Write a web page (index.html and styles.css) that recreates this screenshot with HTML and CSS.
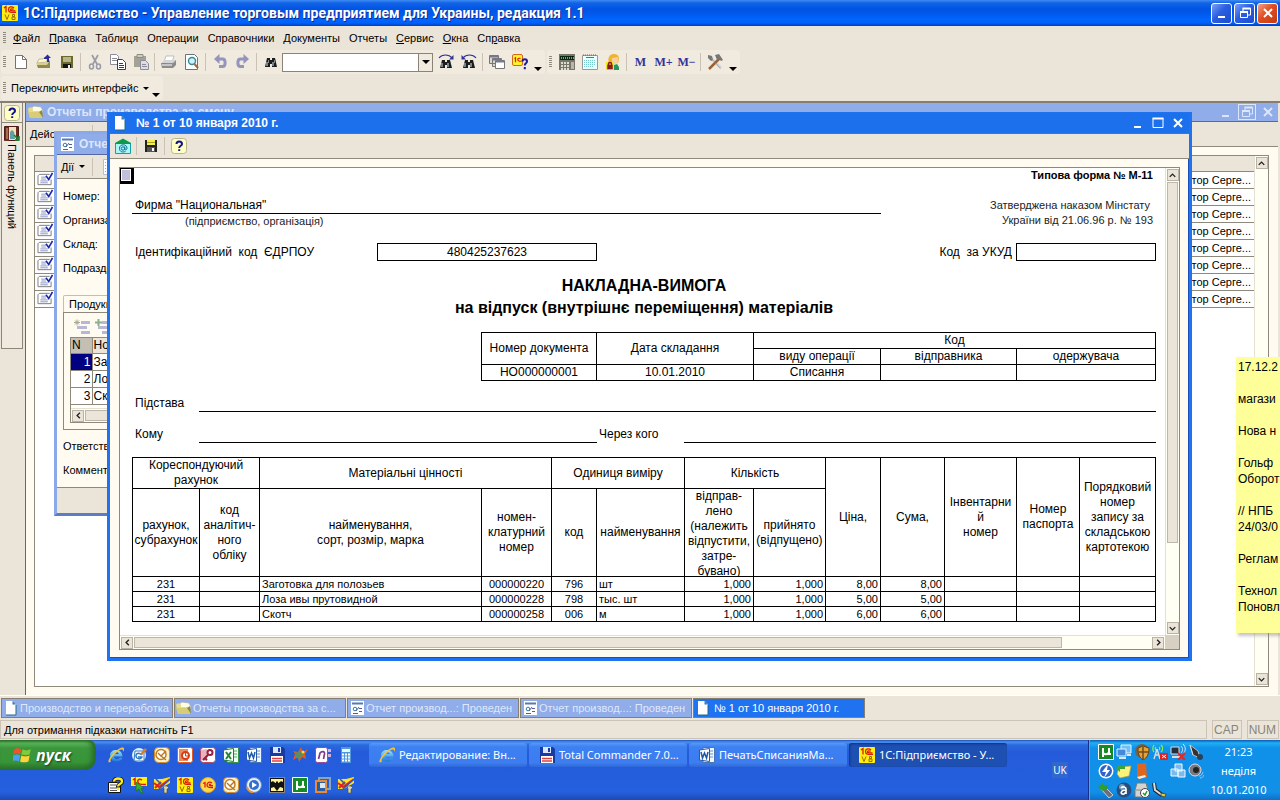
FILE: index.html
```html
<!DOCTYPE html>
<html lang="uk">
<head>
<meta charset="utf-8">
<title>1С:Підприємство - Управление торговым предприятием для Украины, редакция 1.1</title>
<link rel="stylesheet" href="styles.css">
</head>
<body>
<svg class="sprite" aria-hidden="true">
  <defs>
    <linearGradient id="g-ie" x1="0" y1="0" x2="0" y2="1"><stop offset="0" stop-color="#9be0ff"/><stop offset="1" stop-color="#1b78d6"/></linearGradient>
  </defs>
  <symbol id="v8" viewBox="0 0 16 16"><rect width="16" height="16" rx="1" fill="#ffee10"/><path d="M2 3l2-1.500v6M12 3C10 1 6.500 1.500 6.500 4.500S9 7.500 14 7.300M11.500 4.500C10 3.300 8.500 4 8.500 5s1 .8 5 .8" fill="none" stroke="#d91c10" stroke-width="1.300"/><path d="M3 9.500l2 5 2-5M10.500 9.500h2v2h-2zM10 12h3v2.500h-3z" fill="none" stroke="#9a6a00"/></symbol>
  <symbol id="onec" viewBox="0 0 16 16"><circle cx="8" cy="8" r="7.500" fill="#ffd94a" stroke="#e9a51b"/><path d="M3 6.500l2-1v5M12 6C10 4.500 7 5 7 8s3 2.500 6 2.500M11 7.500c-2-.7-2.500 1 0 1.200h2" fill="none" stroke="#d91c10" stroke-width="1.300"/></symbol>
  <symbol id="doc" viewBox="0 0 16 16"><path d="M2.500 1.500h7l4 4v9h-11z" fill="#fff" stroke="#77716a"/><path d="M9.500 1.500v4h4" fill="none" stroke="#77716a"/></symbol>
  <symbol id="docw" viewBox="0 0 16 16"><path d="M3 1h6.500L13 4.500V15H3z" fill="#fff"/><path d="M9.500 1v3.500H13z" fill="#3c7c9c"/><path d="M3 15h10V5" fill="none" stroke="#256988"/></symbol>
  <symbol id="openf" viewBox="0 0 16 16"><path d="M1 9l2-4h4l1-1.500 3 .5v4z" fill="#fff8c8" stroke="#aaa37c" stroke-width=".7"/><path d="M0 9h10l4-3v8H2z" fill="#d8d08c"/><path d="M2 14h12V6l-3 5H1z" fill="#8c8a50"/><path d="M8 5h3v3h2V4h2l-3.500-3.500L8 4z" fill="#2b2b9b"/></symbol>
  <symbol id="save" viewBox="0 0 16 16"><path d="M2 2h12v12H2z" fill="#6b682c"/><path d="M4 3h8v5H4z" fill="#b7b58a"/><path d="M4 10h8v4H4z" fill="#151510"/><path d="M9 11h2v3H9z" fill="#eee"/></symbol>
  <symbol id="savey" viewBox="0 0 16 16"><path d="M2 2h12v12H2z" fill="#222"/><path d="M4 2h8v5H4z" fill="#f6ee3c"/><path d="M4 4h8v1H4z" fill="#aaa12c"/><path d="M4 9h8v5H4z" fill="#555"/><path d="M9 10h2v3H9z" fill="#fff"/></symbol>
  <symbol id="cut" viewBox="0 0 16 16"><path d="M5 1l5 9M11 1L6 10" stroke="#9b9ba6" stroke-width="1.700"/><ellipse cx="4.500" cy="12.500" rx="2" ry="2.500" fill="none" stroke="#9b9ba6" stroke-width="1.500"/><ellipse cx="11.500" cy="12.500" rx="2" ry="2.500" fill="none" stroke="#9b9ba6" stroke-width="1.500"/></symbol>
  <symbol id="copy" viewBox="0 0 16 16"><path d="M.5.500h6l2 2v8h-8z" fill="#fff" stroke="#8b8b99"/><path d="M2 4.500h5M2 6.500h5" stroke="#8b8b99"/><path d="M7.500 5.500h5l3 3v7h-8z" fill="#fff" stroke="#33339b"/><path d="M9 9.500h4M9 11.500h5M9 13.500h5" stroke="#33339b"/></symbol>
  <symbol id="paste" viewBox="0 0 16 16"><path d="M1 2h12v11H1z" fill="#a3a294"/><path d="M4 .5h6v3H4z" fill="#cfcdbd" stroke="#8f8e82"/><path d="M7.500 6.500h5l3 3v6h-8z" fill="#dedde4" stroke="#8b8b99"/><path d="M9 10.500h4M9 12.500h5" stroke="#8b8b99"/></symbol>
  <symbol id="print" viewBox="0 0 16 16"><path d="M5 2h8l-2 6H3z" fill="#fff" stroke="#aaa" stroke-width=".7"/><path d="M1 8l3-2h11l-2 4H1z" fill="#d5d5d5"/><path d="M0 9h12l3-3v5l-3 3H1z" fill="#8c8c8c"/><path d="M1 11h10" stroke="#fff"/><path d="M2 9.500h3" stroke="#2fb35c"/></symbol>
  <symbol id="preview" viewBox="0 0 16 16"><path d="M1.500.500h9l3 3v12h-12z" fill="#fff" stroke="#66747c"/><circle cx="8" cy="7" r="3.500" fill="#cdf2f7" stroke="#36899b" stroke-width="1.400"/><path d="M10.500 10l3.500 4" stroke="#a06a32" stroke-width="2"/></symbol>
  <symbol id="undo" viewBox="0 0 16 16"><path d="M5 5h5.500c3.500 0 3.500 7.500 0 7.500H7" fill="none" stroke="#9494bc" stroke-width="3"/><path d="M7.500 0v10L2 5z" fill="#9494bc"/></symbol>
  <symbol id="redo" viewBox="0 0 16 16"><path d="M11 5H5.500C2 5 2 12.500 5.500 12.500H9" fill="none" stroke="#9494bc" stroke-width="3"/><path d="M8.500 0v10L14 5z" fill="#9494bc"/></symbol>
  <symbol id="find" viewBox="0 0 16 16"><path d="M4 4h3v2h2V4h3l2 9H9v-3H7v3H2z" fill="#1d1d1d"/><path d="M4 8v4M10 8v4" stroke="#c4f0f0"/><path d="M5.500 6v3M11.500 6v3" stroke="#888"/></symbol>
  <symbol id="findn" viewBox="0 0 16 16"><path d="M4 6h3v2h2V6h3l2 8H9v-3H7v3H2z" fill="#1d1d1d"/><path d="M4 9v4M10 9v4" stroke="#c4f0f0"/><path d="M1 4c3-4 10-4 13 0" fill="none" stroke="#33339b" stroke-width="1.200"/><path d="M15.500 1v4.500H11z" fill="#33339b"/></symbol>
  <symbol id="findp" viewBox="0 0 16 16"><path d="M4 6h3v2h2V6h3l2 8H9v-3H7v3H2z" fill="#1d1d1d"/><path d="M4 9v4M10 9v4" stroke="#c4f0f0"/><path d="M15 4C12 0 5 0 2 4" fill="none" stroke="#33339b" stroke-width="1.200"/><path d="M.5 1v4.500H5z" fill="#33339b"/></symbol>
  <symbol id="wins" viewBox="0 0 16 16"><path d="M.5 1.500h9v8h-9zM3.500 4.500h9v8h-9z" fill="#d9d6d0" stroke="#777"/><path d="M6.500 6.500h9v8h-9z" fill="#fff" stroke="#777"/><path d="M1 2.500h8M4 5.500h8M7 7.500h8" stroke="#77798c" stroke-width="2"/></symbol>
  <symbol id="help1c" viewBox="0 0 16 16"><rect x=".5" y=".5" width="10" height="11" rx="1.500" fill="#fff22a" stroke="#d36a15"/><path d="M2.500 4.500l1-.7v4.500M8.500 4.500C4.500 3 5 8.500 9.500 7" fill="none" stroke="#d91c10" stroke-width="1.200"/><path d="M10.500 7.500c0-3 4.500-3 4.500 0 0 2-2.200 1.700-2.200 4M12.800 13v2.200" fill="none" stroke="#1c1c9c" stroke-width="2"/></symbol>
  <symbol id="calc" viewBox="0 0 16 16"><path d="M0 0h16v16H0z" fill="#77756c"/><path d="M1 2h14v4H1z" fill="#062a10"/><path d="M2 4h13" stroke="#22d060" stroke-width="2" stroke-dasharray="1 1"/><path d="M2 9h9M2 12h9M2 15h9" stroke="#dedbd0" stroke-width="2" stroke-dasharray="2 1"/><path d="M12 8h3v7h-3z" fill="#b8b5aa"/></symbol>
  <symbol id="cal" viewBox="0 0 16 16"><path d="M.5 1.500h15v14H.5z" fill="#eaffff" stroke="#999"/><path d="M1 1h14" stroke="#666" stroke-dasharray="1 1"/><path d="M4 3.500h8" stroke="#d6491d"/><path d="M2 6.500h12M2 8.500h12M2 10.500h12M2 12.500h10" stroke="#74cccc" stroke-dasharray="1 1"/></symbol>
  <symbol id="user" viewBox="0 0 16 16"><path d="M4 10C2 3 5 0 9 0c5 0 6 4 4 9z" fill="#eeb524"/><path d="M7 4l6-1 .5 4-2 3H7z" fill="#f8cda8"/><path d="M6 16l3-5 3-1 2 3v3z" fill="#249a5a"/><path d="M1 8h8v8H1z" fill="#f4e51b"/><path d="M3.500 11.500V10a1.500 1.500 0 013 0v1.500M3 11.500h4v3H3z" fill="none" stroke="#8c1a20" stroke-width="1.500"/><path d="M3 11.500h4v3H3z" fill="#8c1a20"/></symbol>
  <symbol id="tools" viewBox="0 0 16 16"><path d="M2 2l12 12" stroke="#d8d8d8" stroke-width="3"/><path d="M1 1l4 1 1 4-2 1-3-3z" fill="#777"/><path d="M13 4L2 15" stroke="#9b6235" stroke-width="2.500"/><path d="M8 1l4-1 4 6-2 1-2-2-2 1z" fill="#777"/><path d="M4 4l9.500 10.500" stroke="#888" stroke-width=".7"/></symbol>
  <symbol id="help" viewBox="0 0 16 16"><rect x=".5" y=".5" width="15" height="15" rx="3" fill="#ffffc4" stroke="#b9b48e"/><path d="M5.500 6C5.500 2.500 11 2.500 11 6c0 2-2.800 1.500-2.800 4M8.200 11.300V13" fill="none" stroke="#13138c" stroke-width="2"/></symbol>
  <symbol id="home" viewBox="0 0 16 16"><path d="M.5 5.500h15v10H.5z" fill="#aef6f6" stroke="#12a0a6"/><path d="M0 5L8 .5 16 5v1H0z" fill="#0c9a4b"/><circle cx="8" cy="10.500" r="1.700" fill="none" stroke="#096d93"/><path d="M9.800 8.500V11c0 1.500 2.200 1 2.200-.8 0-4.500-7.500-4.500-7.500 0 0 4 3.500 4.300 6 3.200" fill="none" stroke="#096d93"/></symbol>
  <symbol id="folders" viewBox="0 0 16 16"><path d="M2 5l4-3 7 1 2 4-3 5H2z" fill="#fffde4" stroke="#aaa" stroke-width=".7"/><path d="M0 5l1-1.500h3L5 5v2h9v7H2z" fill="#e6dc8c"/><path d="M2 14L0 8h11l4 6z" fill="#d8cc74"/><path d="M11 8l3-2 1 8z" fill="#8d8844"/></symbol>
  <symbol id="report" viewBox="0 0 16 16"><path d="M2 1h13v14H2z" fill="#fff"/><path d="M3 3.500h11" stroke="#5878b0" stroke-width="2"/><circle cx="6" cy="9" r="1.800" fill="none" stroke="#337f9c"/><path d="M7 11l3-4M10 8.500h3M10 11.500h3M4 13.500h5" stroke="#555ba2"/></symbol>
  <symbol id="rowdoc" viewBox="0 0 16 16"><path d="M13 2.500H2L.5 4v9.500h14V8" fill="#fff" stroke="#777"/><path d="M4 5.500h5M4 7.500h5M3 9.500h8M3 11.500h8" stroke="#8892c4"/><path d="M9 4l3 4 4-7" fill="none" stroke="#1928a8" stroke-width="1.700"/></symbol>
  <symbol id="door" viewBox="0 0 16 16"><path d="M.5.500h14v14H.5z" fill="#f1dfbd" stroke="#4b1c14"/><path d="M1 1h4v14H1zM12 1h2v14h-2z" fill="#6f2b20"/><path d="M3 2v11" stroke="#d9b38b"/><path d="M6 13V6l2-2 2 2 1 7z" fill="#5ba1a5"/><path d="M10 9l5 5m0-4v4h-4" fill="none" stroke="#178736" stroke-width="1.600"/></symbol>
  <symbol id="list" viewBox="0 0 16 16"><path d="M.5.500h15v15H.5z" fill="#fff" stroke="#b4bedb"/><path d="M2 3.500h12M2 6.500h12M2 9.500h12M2 12.500h12" stroke="#8da5d8" stroke-dasharray="1 1"/><path d="M5 8l5-4v3h5v2h-5v3z" fill="#2a13b0"/></symbol>
  <symbol id="addrow" viewBox="0 0 16 16"><path d="M7 2h9v3H7zM3 7h10v3H3zM7 12h9v3H7z" fill="#b7b8d4"/><path d="M0 3.500h6M3 .5v6M1 1.500l4 4M5 1.500l-4 4" stroke="#a8a891"/></symbol>
  <symbol id="addrow2" viewBox="0 0 16 16"><path d="M7 2h9v3H7zM3 7h10v3H3zM7 12h9v3H7z" fill="#b7b8d4"/><path d="M0 3.500h7M3.500 0v7" stroke="#8fae8f" stroke-width="2"/></symbol>
  <symbol id="star" viewBox="0 0 16 16"><path d="M8 1l2 4 5-1-3 4 3 4-5-1-2 4-2-4-5 1 3-4-3-4 5 1z" fill="#f7d92a"/></symbol>
  <symbol id="ie" viewBox="0 0 16 16"><path d="M14.500 9.500H6c.3 3.300 4.500 3.500 5.500 1.300h3C12.500 16.500 2 16 2 8.500 2 1 14.500 1 14.500 9.500zM6 7h4.800C10.500 4.300 6.300 4.300 6 7z" fill="url(#g-ie)"/><path d="M1 15.500c-3-2 8-15 13.500-15 2.500 0 1.500 3 .5 4.500.5-3-1.500-3-4.500-1C5.500 7.500 1 13 3 14.500z" fill="#f6c52e"/></symbol>
  <symbol id="mail" viewBox="0 0 16 16"><circle cx="8" cy="8" r="7" fill="#dff2ff"/><path d="M4 4h9v10H3z" fill="#fff" stroke="#3a7ac0"/><path d="M11 8c-4-4-8 0-5 3 2 1.500 5 0 5-1H7" fill="none" stroke="#2878c8" stroke-width="1.500"/><path d="M9 7l5-6 2 2-5 5z" fill="#e07b25"/></symbol>
  <symbol id="outlook" viewBox="0 0 16 16"><rect x=".5" y=".5" width="15" height="15" rx="4" fill="#fff1c9" stroke="#d28b25"/><circle cx="7" cy="7.500" r="5" fill="#fff" stroke="#c47e1d" stroke-width="1.500"/><path d="M4 6l3 3 5-5M7 9l5 4" fill="none" stroke="#b77522" stroke-width="1.400"/></symbol>
  <symbol id="ppt" viewBox="0 0 16 16"><rect x=".5" y=".5" width="15" height="15" rx="2" fill="#fff" stroke="#df5b29"/><path d="M2 2h9v12H2z" fill="#ef8b60"/><circle cx="8.500" cy="8.500" r="3.500" fill="#fff" stroke="#d43e17" stroke-width="2"/><path d="M8.500 5v4H12" stroke="#d43e17" fill="none"/></symbol>
  <symbol id="access" viewBox="0 0 16 16"><rect x=".5" y=".5" width="15" height="15" rx="3" fill="#fff" stroke="#b04b61"/><path d="M1 3l6-1v12l-6-1z" fill="#e8b3bf"/><circle cx="10" cy="5.500" r="2.500" fill="none" stroke="#9a1e3c" stroke-width="2"/><path d="M8 8l-5 5M5 11l2 2" stroke="#9a1e3c" stroke-width="2"/></symbol>
  <symbol id="excel" viewBox="0 0 16 16"><path d="M4 .5h11.500v15H4z" fill="#edfff0" stroke="#37914b"/><path d="M11 4h3M11 7h3M11 10h3" stroke="#57ad66"/><path d="M.5 3l10-1.500v13L.5 13z" fill="#fff" stroke="#237a38"/><path d="M3 5l5 7M8 5l-5 7" stroke="#21853a" stroke-width="2"/></symbol>
  <symbol id="word" viewBox="0 0 16 16"><path d="M4 .5h11.500v15H4z" fill="#edf6ff" stroke="#4774b4"/><path d="M11 4h3M11 7h3M11 10h3" stroke="#6d92c9"/><path d="M.5 3l10-1.500v13L.5 13z" fill="#fff" stroke="#2c5ba3"/><path d="M2 5l1.500 6L5.500 6l2 5L9 5" fill="none" stroke="#1d58aa" stroke-width="1.500"/></symbol>
  <symbol id="floppy" viewBox="0 0 16 16"><path d="M1 0h13l2 2v14H1z" fill="#173ba2"/><path d="M4 0h8v6H4z" fill="#dbe5ff"/><path d="M9 1h2v4H9z" fill="#173ba2"/><path d="M2 9h12v7H2z" fill="#fff"/><path d="M3 11.500h10M3 14h10" stroke="#e04141" stroke-width="1.300"/></symbol>
  <symbol id="bird" viewBox="0 0 16 16"><path d="M1 4l5 1 3-5 2 5 5-3-3 5 1 5-4-2-3 5-1-5-5 3 2-6z" fill="#e25d17"/><path d="M3 6l5-2 4 3-5 5-4-2z" fill="#5c8d62"/><circle cx="11" cy="5" r="1.500" fill="#ffd92d"/></symbol>
  <symbol id="note" viewBox="0 0 16 16"><rect x=".5" y=".5" width="12" height="15" rx="2" fill="#fff" stroke="#994b9b"/><path d="M13 2h3v3h-3zM13 7h3v3h-3z" fill="#d6afe0"/><path d="M3.500 12l1.500-6c1.500-2 5-2 4.500 1L8.500 12" fill="none" stroke="#82388c" stroke-width="1.700"/></symbol>
  <symbol id="pcalc" viewBox="0 0 16 16"><path d="M3 0h10v16H3z" fill="#4f98db"/><path d="M4 2h8v3H4z" fill="#e8fbff"/><path d="M4 7.500h8M4 10.500h8M4 13.500h8" stroke="#fff" stroke-width="2" stroke-dasharray="2 1"/></symbol>
  <symbol id="pchelp" viewBox="0 0 16 16"><path d="M.5 5.500h9l3 2v8H.5z" fill="#fff" stroke="#111"/><path d="M2 8h6M2 11h7M2 13.500h7" stroke="#555"/><path d="M6 4.500C6 .5 14 .5 14 4.500c0 3-4 2-4 5v1" fill="none" stroke="#111" stroke-width="4"/><path d="M6 4.500C6 .5 14 .5 14 4.500c0 3-4 2-4 5M10 11v2" fill="none" stroke="#ffee22" stroke-width="2.300"/></symbol>
  <symbol id="oneca" viewBox="0 0 16 16"><rect width="16" height="9" fill="#ffee10"/><path d="M2 3l2-1.500V8M11 3C8 1 6 3 7 5.500s4 2 8 2" fill="none" stroke="#d91c10" stroke-width="1.500"/><path d="M5 5l8 6-3 .5 2 4-2 .5-2-4-3 2z" fill="#38ac36" stroke="#17691a" stroke-width=".6"/></symbol>
  <symbol id="conf" viewBox="0 0 16 16"><path d="M0 2h8l8-2v6L6 12H0z" fill="#ffe323"/><path d="M0 6l5 4 11-8M1 11l6-6" fill="none" stroke="#e3211b" stroke-width="2"/><path d="M2 2l5 5M4 13L15 3" stroke="#2d5bc9" stroke-width="1.600"/><path d="M9 9h4l2 2-2 1v4h-3v-4z" fill="#d9d5b5" stroke="#444" stroke-width=".6"/></symbol>
  <symbol id="wmp" viewBox="0 0 16 16"><circle cx="8" cy="8" r="7.500" fill="#e7edf5" stroke="#6a88bd"/><circle cx="8" cy="8" r="5" fill="#2e6fd0"/><path d="M6 5l5 3-5 3z" fill="#fff"/><path d="M1 10a7.500 7.500 0 006 5.500" fill="none" stroke="#e79430" stroke-width="2"/></symbol>
  <symbol id="bat" viewBox="0 0 16 16"><path d="M0 0h16v16H0z" fill="#111"/><path d="M.5.500h15v15H.5z" fill="none" stroke="#fff" stroke-dasharray="1 1"/><path d="M2 2h12v12H2z" fill="#fff39a"/><path d="M2 5c3-2 3 1 5 1V4l1 1 1-1v2c2 0 2-3 5-1v6l-3-1-3 4-3-4-3 1z" fill="#111"/></symbol>
  <symbol id="mu" viewBox="0 0 16 16"><path d="M.5.500h15v15H.5z" fill="#168b25" stroke="#fff"/><path d="M5 4v9M5 8c0 3 5 3 6 0V4v6h2" fill="none" stroke="#fff" stroke-width="2"/></symbol>
  <symbol id="vm" viewBox="0 0 16 16"><path d="M4 1h11v11H4z" fill="none" stroke="#86a8bd" stroke-width="2"/><path d="M1 4h10v11H1z" fill="#295e9d" stroke="#e88a39" stroke-width="2"/><path d="M5 6h5v5H5z" fill="#dce6ee"/></symbol>
  <symbol id="net" viewBox="0 0 16 16"><path d="M5 1h10v8H5z" fill="#72bff5" stroke="#e8f4ff"/><path d="M1 5h9v7H1z" fill="#4689d8" stroke="#e8f4ff"/><path d="M3 14h7M11 11h4" stroke="#dce8ee" stroke-width="2"/></symbol>
  <symbol id="shield" viewBox="0 0 16 16"><circle cx="8" cy="7" r="7" fill="#6f6352"/><path d="M4 4l5-2 6 2c0 6-2 10-6 12-3-2-5-5-5-12z" fill="#e0a43c" stroke="#623e14"/><path d="M9 3v12M5 8h9" stroke="#784713" stroke-width="1.500"/></symbol>
  <symbol id="wifi" viewBox="0 0 16 16"><path d="M5 5l-3 10M5 5l3 10M3 11h4" fill="none" stroke="#d7dddd" stroke-width="1.400"/><path d="M2 1c-2 3-1 6 0 7M9 1c3 3 1 6 0 7M4 3c-1 1-1 2 0 3M7 3c1 1 1 2 0 3" fill="none" stroke="#7ff048" stroke-width="1.300"/><rect x="8" y="9" width="8" height="7" rx="1" fill="#e12222"/><path d="M10 11l4 3M14 11l-4 3" stroke="#fff"/></symbol>
  <symbol id="nonet" viewBox="0 0 16 16"><path d="M1 3h8v7H1z" fill="#262e3d" stroke="#ddd"/><path d="M2 13h8" stroke="#ddd" stroke-width="2"/><path d="M11 2c2 2 2 5 0 7M13 0c3 3 3 7 0 10" fill="none" stroke="#dfe9f2"/><path d="M8 9l7 7M15 9l-7 7" stroke="#e22828" stroke-width="2"/></symbol>
  <symbol id="pen" viewBox="0 0 16 16"><path d="M2 1l8 6 2 7-7-3z" fill="#333" stroke="#bbb"/><path d="M2 1l3 10" stroke="#ddd"/><circle cx="12" cy="13" r="3" fill="#29425a"/></symbol>
  <symbol id="bolt" viewBox="0 0 16 16"><circle cx="8" cy="8" r="7.500" fill="#fff"/><circle cx="8" cy="8" r="6" fill="#2c66cd"/><path d="M10 1L4 9h4l-2 6 6-8H9z" fill="#fff"/></symbol>
  <symbol id="sticky" viewBox="0 0 16 16"><path d="M3 4l12-1-2 10-9 2-3-4z" fill="#fff27b" stroke="#aaa43c" stroke-width=".7"/><path d="M0 5l4-4v2h5v3H4v3z" fill="#39a53a"/></symbol>
  <symbol id="book" viewBox="0 0 16 16"><path d="M3 1l9-1 1 14-8 2-2-2z" fill="#de661e"/><path d="M3 14l8-2 1 2-7 2z" fill="#fff0d5"/></symbol>
  <symbol id="boxes" viewBox="0 0 16 16"><path d="M5 1h7v7H5zM1 6h7v7H1zM8 7h7v7H8z" fill="#77bbf1" stroke="#f4fbff"/></symbol>
  <symbol id="sound" viewBox="0 0 16 16"><circle cx="7" cy="7" r="6" fill="#777b80" stroke="#ddd"/><circle cx="8" cy="7" r="3" fill="#222"/><path d="M11 13c2 0 3-1 4-4M12 15c2 0 3-1 4-3" fill="none" stroke="#9ac8ff"/></symbol>
  <symbol id="usb" viewBox="0 0 16 16"><path d="M3 7l4-2 8 8-4 3z" fill="#6b7078" stroke="#ccc"/><path d="M0 5l5-4v2h5v4H5v2z" fill="#2da02c"/></symbol>
  <symbol id="ball" viewBox="0 0 16 16"><circle cx="8" cy="8" r="7.500" fill="#284f7e"/><circle cx="6" cy="5" r="3" fill="#7898b9"/><path d="M5 6c2-2 5-1 5 1v5M10 8c-6 0-6 5-2 4l2-2" fill="none" stroke="#fff" stroke-width="1.700"/></symbol>
  <symbol id="disk" viewBox="0 0 16 16"><path d="M3 1h9l2 7v7H1V8z" fill="#d3d3cf" stroke="#777"/><path d="M2 8h11" stroke="#888"/><circle cx="11" cy="11" r="4.500" fill="#fff" stroke="#444"/><path d="M9 11l2 2 2-4" fill="none" stroke="#1b9b31" stroke-width="1.500"/></symbol>
  <symbol id="plug" viewBox="0 0 16 16"><path d="M2 1l1 7 7 5" fill="none" stroke="#222" stroke-width="4"/><path d="M2 1l1 7 7 5" fill="none" stroke="#ddd" stroke-width="2"/><path d="M9 11l5 1-1 3-4-1z" fill="#e0cc39" stroke="#333" stroke-width=".7"/></symbol>
  <symbol id="flag" viewBox="0 0 16 16"><path d="M1 3c3-2 4-1 6 0L6 7C4 6 3 6 0 7z" fill="#ef542c"/><path d="M8 3c3 1 4 1 7-.500L14 7c-3 1-4 1-7 0z" fill="#80cc38"/><path d="M0 8c3-1 4-1 6 0l-1 5c-2-1-4-1-6 0z" fill="#4c9ff4"/><path d="M7 8c3 1 4 1 7 0l-1 5c-3 1-5 1-7 0z" fill="#ffd43a"/></symbol>
  <symbol id="min" viewBox="0 0 16 16"><path d="M4 12h7" stroke="currentColor" stroke-width="2"/></symbol>
  <symbol id="max" viewBox="0 0 16 16"><path d="M3 3.500h10v9H3z" fill="none" stroke="currentColor"/><path d="M2.500 3.500h11" stroke="currentColor" stroke-width="2"/></symbol>
  <symbol id="rest" viewBox="0 0 16 16"><path d="M6 6V3.500h7.500V10H11M3.500 7h7v5.500h-7z" fill="none" stroke="currentColor"/><path d="M5.500 3.500h8M3 7h8" stroke="currentColor" stroke-width="2"/></symbol>
  <symbol id="close" viewBox="0 0 16 16"><path d="M4 4l8 8M12 4l-8 8" stroke="currentColor" stroke-width="2"/></symbol>
  <symbol id="chev" viewBox="0 0 16 16"><path d="M4 10l4-4 4 4" fill="none" stroke="#222" stroke-width="2"/></symbol>
</svg>

<header class="app-title">
  <svg class="ic"><use href="#v8"/></svg>
  <h1>1С:Підприємство - Управление торговым предприятием для Украины, редакция 1.1</h1>
  <button class="xp" aria-label="Згорнути"><svg class="ic"><use href="#min"/></svg></button>
  <button class="xp" aria-label="Відновити"><svg class="ic"><use href="#rest"/></svg></button>
  <button class="xp red" aria-label="Закрити"><svg class="ic"><use href="#close"/></svg></button>
</header>

<nav class="menu">
  <i class="grip"></i>
  <button><u>Ф</u>айл</button><button><u>П</u>равка</button><button>Таблиця</button><button>Операции</button><button>Справочники</button><button>Документы</button><button>Отчеты</button><button><u>С</u>ервис</button><button><u>О</u>кна</button><button>Сп<u>р</u>авка</button>
</nav>

<div class="bars">
  <div class="bar">
    <i class="grip"></i>
    <button aria-label="Новый"><svg class="ic"><use href="#doc"/></svg></button>
    <button aria-label="Открыть"><svg class="ic"><use href="#openf"/></svg></button>
    <button aria-label="Сохранить"><svg class="ic"><use href="#save"/></svg></button>
    <i class="sep"></i>
    <button aria-label="Вырезать"><svg class="ic"><use href="#cut"/></svg></button>
    <button aria-label="Копировать"><svg class="ic"><use href="#copy"/></svg></button>
    <button aria-label="Вставить"><svg class="ic"><use href="#paste"/></svg></button>
    <i class="sep"></i>
    <button aria-label="Печать"><svg class="ic"><use href="#print"/></svg></button>
    <button aria-label="Просмотр"><svg class="ic"><use href="#preview"/></svg></button>
    <i class="sep"></i>
    <button aria-label="Отменить"><svg class="ic"><use href="#undo"/></svg></button>
    <button aria-label="Вернуть"><svg class="ic"><use href="#redo"/></svg></button>
    <i class="sep"></i>
    <button aria-label="Найти"><svg class="ic"><use href="#find"/></svg></button>
    <span class="combo"><input type="text" aria-label="Поиск"><button aria-label="Список"><i class="tri"></i></button></span>
    <button aria-label="Найти далее"><svg class="ic"><use href="#findn"/></svg></button>
    <button aria-label="Найти ранее"><svg class="ic"><use href="#findp"/></svg></button>
    <i class="sep"></i>
    <button aria-label="Окна"><svg class="ic"><use href="#wins"/></svg></button>
    <button aria-label="Справка 1С"><svg class="ic"><use href="#help1c"/></svg></button>
    <button class="more" aria-label="Ещё"><i class="tri"></i></button>
  </div>
  <div class="bar">
    <i class="grip"></i>
    <button aria-label="Калькулятор"><svg class="ic"><use href="#calc"/></svg></button>
    <button aria-label="Календарь"><svg class="ic"><use href="#cal"/></svg></button>
    <button aria-label="Пользователь"><svg class="ic"><use href="#user"/></svg></button>
    <i class="sep"></i>
    <button class="mem">M</button><button class="mem">M+</button><button class="mem">M−</button>
    <i class="sep"></i>
    <button aria-label="Настройка"><svg class="ic"><use href="#tools"/></svg></button>
    <button class="more" aria-label="Ещё"><i class="tri"></i></button>
  </div>
</div>
<div class="bars second">
  <div class="bar">
    <i class="grip"></i>
    <button class="label">Переключить интерфейс <i class="tri small"></i></button>
    <button class="more" aria-label="Ещё"><i class="tri"></i></button>
  </div>
</div>

<main class="work">
  <aside class="side">
    <div class="side-panel">
      <button aria-label="Справка"><svg class="ic"><use href="#help"/></svg></button>
      <button class="fn"><svg class="ic"><use href="#door"/></svg><span>Панель функций</span></button>
    </div>
  </aside>

  <div class="mdi">
    <section class="win back">
      <header class="wt"><svg class="ic"><use href="#folders"/></svg><h2>Отчеты производства за смену</h2>
        <button aria-label="Згорнути"><svg class="ic"><use href="#min"/></svg></button>
        <button class="boxed" aria-label="Відновити"><svg class="ic"><use href="#rest"/></svg></button>
        <button aria-label="Закрити"><svg class="ic"><use href="#close"/></svg></button>
      </header>
      <div class="wtools"><button class="label">Действия</button><i class="sep"></i><button aria-label="Добавить"><svg class="ic"><use href="#star"/></svg></button></div>
      <div class="wbody">
        <div class="frame">
          <table class="journal">
            <thead><tr><th colspan="2"></th></tr></thead>
            <tbody>
              <tr><td><svg class="ic"><use href="#rowdoc"/></svg></td><td>тор Серге...</td></tr>
              <tr><td><svg class="ic"><use href="#rowdoc"/></svg></td><td>тор Серге...</td></tr>
              <tr><td><svg class="ic"><use href="#rowdoc"/></svg></td><td>тор Серге...</td></tr>
              <tr><td><svg class="ic"><use href="#rowdoc"/></svg></td><td>тор Серге...</td></tr>
              <tr><td><svg class="ic"><use href="#rowdoc"/></svg></td><td>тор Серге...</td></tr>
              <tr><td><svg class="ic"><use href="#rowdoc"/></svg></td><td>тор Серге...</td></tr>
              <tr><td><svg class="ic"><use href="#rowdoc"/></svg></td><td>тор Серге...</td></tr>
              <tr><td><svg class="ic"><use href="#rowdoc"/></svg></td><td>тор Серге...</td></tr>
            </tbody>
          </table>
          <div class="vs"><button aria-label="Вгору"><svg><use href="#chev"/></svg></button><i class="track"></i><button class="down" aria-label="Вниз"><svg><use href="#chev"/></svg></button></div>
        </div>
      </div>
    </section>

    <section class="win mid">
      <header class="wt"><svg class="ic"><use href="#report"/></svg><h2>Отчет</h2></header>
      <div class="wtools"><button class="label">Дії <i class="tri small"></i></button><i class="sep"></i><button aria-label="Список"><svg class="ic"><use href="#list"/></svg></button></div>
      <div class="form">
        <p>Номер:</p><p>Организация:</p><p>Склад:</p><p>Подразделение:</p>
        <button class="tab">Продукция</button>
        <div class="tabpage">
          <div class="rowtools"><button aria-label="Добавить"><svg class="ic"><use href="#addrow"/></svg></button><button aria-label="Вставить"><svg class="ic"><use href="#addrow2"/></svg></button></div>
          <div class="items-box">
            <table class="items">
              <thead><tr><th>N</th><th>Номенклатура</th></tr></thead>
              <tbody><tr class="sel"><td>1</td><td>Заготовка</td></tr><tr><td>2</td><td>Лоза</td></tr><tr><td>3</td><td>Скотч</td></tr></tbody>
            </table>
            <div class="hs"><button class="left" aria-label="Вліво"><svg><use href="#chev"/></svg></button><i class="thumb"></i></div>
          </div>
        </div>
        <p>Ответственный:</p><p>Комментарий:</p>
      </div>
      <footer></footer>
    </section>

    <section class="win front">
      <header class="wt"><svg class="ic"><use href="#docw"/></svg><h2>№ 1 от 10 января 2010 г.</h2>
        <button aria-label="Згорнути"><svg class="ic"><use href="#min"/></svg></button>
        <button aria-label="Розгорнути"><svg class="ic"><use href="#max"/></svg></button>
        <button aria-label="Закрити"><svg class="ic"><use href="#close"/></svg></button>
      </header>
      <div class="wtools"><button aria-label="Отправить"><svg class="ic"><use href="#home"/></svg></button><i class="sep"></i><button aria-label="Сохранить"><svg class="ic"><use href="#savey"/></svg></button><i class="sep"></i><button aria-label="Справка"><svg class="ic"><use href="#help"/></svg></button></div>
      <div class="wbody">
        <div class="viewer">
          <article class="sheet">
            <i class="cell"></i>
            <p class="form-no">Типова форма № М-11</p>
            <div class="firm">
              <div class="firm-l"><p class="firm-name">Фирма "Национальная"</p><p class="firm-sub">(підприємство, організація)</p></div>
              <div class="firm-r"><p>Затверджена наказом Мінстату&nbsp;</p><p>України від 21.06.96 р. № 193</p></div>
            </div>
            <div class="codes"><span class="code-l">Ідентифікаційний&nbsp; код&nbsp; ЄДРПОУ</span><span class="box id">480425237623</span><span class="code-r">Код&nbsp; за УКУД</span><span class="box ukud"></span></div>
            <h3>НАКЛАДНА-ВИМОГА<br>на відпуск (внутрішнє переміщення) матеріалів</h3>
            <table class="grid head">
              <colgroup><col class="h1"><col class="h2"><col class="h3"><col class="h4"><col></colgroup>
              <tr><th rowspan="2">Номер документа</th><th rowspan="2">Дата складання</th><th colspan="3">Код</th></tr>
              <tr><th>виду операції</th><th>відправника</th><th>одержувача</th></tr>
              <tr><td>НО000000001</td><td>10.01.2010</td><td>Списання</td><td></td><td></td></tr>
            </table>
            <div class="line"><span class="cap">Підстава</span><i></i></div>
            <div class="line"><span class="cap">Кому</span><i class="who"></i><span class="via">Через кого</span><i></i></div>
            <table class="grid goods">
              <colgroup><col class="c1"><col class="c2"><col><col class="c4"><col class="c5"><col class="c6"><col class="c7"><col class="c8"><col class="c9"><col class="c10"><col class="c11"><col class="c12"><col class="c13"></colgroup>
              <thead>
                <tr class="r1"><th colspan="2">Кореспондуючий<br>рахунок</th><th colspan="2">Матеріальні цінності</th><th colspan="2">Одиниця виміру</th><th colspan="2">Кількість</th><th rowspan="2">Ціна,</th><th rowspan="2">Сума,</th><th rowspan="2">Інвентарни<br>й<br>номер</th><th rowspan="2">Номер<br>паспорта</th><th rowspan="2">Порядковий<br>номер<br>запису за<br>складською<br>картотекою</th></tr>
                <tr class="r2"><th>рахунок,<br>субрахунок</th><th>код<br>аналітич-<br>ного<br>обліку</th><th>найменування,<br>сорт, розмір, марка</th><th>номен-<br>клатурний<br>номер</th><th>код</th><th>найменування</th><th><div class="clip">відправ-<br>лено<br>(належить<br>відпустити,<br>затре-<br>бувано)</div></th><th>прийнято<br>(відпущено)</th></tr>
              </thead>
              <tbody>
                <tr><td>231</td><td></td><td class="l">Заготовка для полозьев</td><td>000000220</td><td>796</td><td class="l">шт</td><td class="r">1,000</td><td class="r">1,000</td><td class="r">8,00</td><td class="r">8,00</td><td></td><td></td><td></td></tr>
                <tr><td>231</td><td></td><td class="l">Лоза ивы прутовидной</td><td>000000228</td><td>798</td><td class="l">тыс. шт</td><td class="r">1,000</td><td class="r">1,000</td><td class="r">5,00</td><td class="r">5,00</td><td></td><td></td><td></td></tr>
                <tr><td>231</td><td></td><td class="l">Скотч</td><td>000000258</td><td>006</td><td class="l">м</td><td class="r">1,000</td><td class="r">1,000</td><td class="r">6,00</td><td class="r">6,00</td><td></td><td></td><td></td></tr>
              </tbody>
            </table>
          </article>
          <div class="vs"><button aria-label="Вгору"><svg><use href="#chev"/></svg></button><i class="thumb"></i><i class="rest"></i><button class="down" aria-label="Вниз"><svg><use href="#chev"/></svg></button></div>
          <div class="hs"><button class="left" aria-label="Вліво"><svg><use href="#chev"/></svg></button><i class="thumb"></i><i class="rest"></i><button class="right" aria-label="Вправо"><svg><use href="#chev"/></svg></button></div>
          <i class="corner"></i>
        </div>
      </div>
    </section>
  </div>
</main>

<nav class="wins">
  <button><svg class="ic"><use href="#docw"/></svg><span>Производство и переработка</span></button>
  <button><svg class="ic"><use href="#folders"/></svg><span>Отчеты производства за с...</span></button>
  <button><svg class="ic"><use href="#report"/></svg><span>Отчет производ...: Проведен</span></button>
  <button><svg class="ic"><use href="#report"/></svg><span>Отчет производ...: Проведен</span></button>
  <button class="on"><svg class="ic"><use href="#docw"/></svg><span>№ 1 от 10 января 2010 г.</span></button>
</nav>
<div class="status"><span class="msg">Для отримання підказки натисніть F1</span><span class="key">CAP</span><span class="key">NUM</span></div>

<footer class="taskbar">
  <button class="start"><svg><use href="#flag"/></svg>пуск</button>
  <div class="quick">
    <button aria-label="Internet Explorer"><svg class="ic"><use href="#ie"/></svg></button><button aria-label="Mail"><svg class="ic"><use href="#mail"/></svg></button><button aria-label="Outlook"><svg class="ic"><use href="#outlook"/></svg></button><button aria-label="PowerPoint"><svg class="ic"><use href="#ppt"/></svg></button><button aria-label="Access"><svg class="ic"><use href="#access"/></svg></button><button aria-label="Excel"><svg class="ic"><use href="#excel"/></svg></button><button aria-label="Word"><svg class="ic"><use href="#word"/></svg></button><button aria-label="Commander"><svg class="ic"><use href="#floppy"/></svg></button><button aria-label="Bird"><svg class="ic"><use href="#bird"/></svg></button><button aria-label="OneNote"><svg class="ic"><use href="#note"/></svg></button><button aria-label="Калькулятор"><svg class="ic"><use href="#pcalc"/></svg></button>
    <button aria-label="Help"><svg class="ic"><use href="#pchelp"/></svg></button><button aria-label="1C"><svg class="ic"><use href="#oneca"/></svg></button><button aria-label="Конфигуратор"><svg class="ic"><use href="#conf"/></svg></button><button aria-label="1C v8"><svg class="ic"><use href="#v8"/></svg></button><button aria-label="1C start"><svg class="ic"><use href="#onec"/></svg></button><button aria-label="Пошта"><svg class="ic"><use href="#outlook"/></svg></button><button aria-label="Media Player"><svg class="ic"><use href="#wmp"/></svg></button><button aria-label="The Bat"><svg class="ic"><use href="#bat"/></svg></button><button aria-label="uTorrent"><svg class="ic"><use href="#mu"/></svg></button><button aria-label="VMware"><svg class="ic"><use href="#vm"/></svg></button><button aria-label="Конфігуратор"><svg class="ic"><use href="#conf"/></svg></button>
  </div>
  <div class="tasks">
    <button><svg class="ic"><use href="#ie"/></svg><span>Редактирование: Вн...</span></button>
    <button><svg class="ic"><use href="#floppy"/></svg><span>Total Commander 7.0...</span></button>
    <button><svg class="ic"><use href="#word"/></svg><span>ПечатьСписанияМа...</span></button>
    <button class="on"><svg class="ic"><use href="#v8"/></svg><span>1С:Підприємство - У...</span></button>
  </div>
  <button class="lang">UK</button>
  <div class="tray">
    <div class="tray-ic">
      <svg class="ic"><use href="#mu"/></svg><svg class="ic"><use href="#net"/></svg><svg class="ic"><use href="#shield"/></svg><svg class="ic"><use href="#wifi"/></svg><svg class="ic"><use href="#nonet"/></svg><svg class="ic"><use href="#pen"/></svg>
      <svg class="ic"><use href="#bolt"/></svg><svg class="ic"><use href="#sticky"/></svg><svg class="ic"><use href="#book"/></svg><i></i><svg class="ic"><use href="#boxes"/></svg><svg class="ic"><use href="#sound"/></svg>
      <svg class="ic"><use href="#usb"/></svg><svg class="ic"><use href="#ball"/></svg><svg class="ic"><use href="#disk"/></svg><svg class="ic"><use href="#plug"/></svg>
    </div>
    <div class="clock"><span>21:23</span><span>неділя</span><span>10.01.2010</span></div>
  </div>
</footer>

<aside class="sticky">17.12.2<br><br>магази<br><br>Нова н<br><br>Гольф<br>Оборот<br><br>// НПБ<br>24/03/0<br><br>Реглам<br><br>Технол<br>Поновл</aside>
</body>
</html>
```
FILE: styles.css
```css
* { box-sizing: border-box; }
body, p, h1, h2, h3 { margin: 0; }
body {
  display: flex; flex-direction: column; height: 100vh; overflow: hidden; position: relative;
  background: #ebe4d9; color: #000; font: 11px/16px "Liberation Sans", Arial, sans-serif;
}
button { padding: 0; border: 0; background: none; font: inherit; color: inherit; display: flex; align-items: center; justify-content: center; white-space: nowrap; flex: none; }
.sprite { position: absolute; width: 0; height: 0; }
.ic { width: 16px; height: 16px; flex: none; }

.app-title { flex: none; height: 26px; display: flex; align-items: center; gap: 2px; padding: 0 2px; color: #fff;
  background: linear-gradient(#3f8cf3 0, #1263e8 3px, #0054e3 9px, #0058ea 13px, #0066ff 20px, #0060fb 23px, #003fc0 26px); }
.app-title h1 { flex: 1; margin-left: 3px; font: bold 14px/20px Roboto, "Noto Sans", sans-serif; white-space: nowrap; overflow: hidden; text-shadow: 1px 1px 0 #0a2a8c; }
.xp { width: 21px; height: 21px; border: 1px solid #fff; border-radius: 3px; background: linear-gradient(135deg, #7aa0f6, #2a5ee0 45%, #1d4bd0); }
.xp.red { background: linear-gradient(135deg, #f2a284, #df4d22 45%, #c53a10); }

.menu { flex: none; height: 24px; display: flex; align-items: center; padding-left: 3px; gap: 9px; }
.grip { flex: none; width: 3px; height: 12px; background: repeating-linear-gradient(#8f8a80 0 1px, transparent 1px 2px); }
.menu .grip { margin-right: -2px; }
.bars { flex: none; height: 24px; display: flex; gap: 2px; padding-left: 1px; }
.bars.second { margin: 2px 0 1px; }
.bar { display: flex; align-items: center; padding: 0 0 0 2px; background: #f0eadf; border-radius: 3px; }
.bar button { width: 23px; height: 22px; }
.bar .grip { margin-right: 3px; }
.sep { flex: none; width: 5px; height: 18px; background: linear-gradient(#c9c2b5, #c9c2b5) center / 1px 100% no-repeat; }
.tri { flex: none; display: inline-block; border: 4px solid transparent; border-top-color: #000; border-bottom: 0; }
.tri.small { border-width: 3px 3px 0; }
.bar .more { width: 14px; align-items: flex-end; padding-bottom: 2px; }
.bar .label { width: auto; gap: 4px; padding-left: 2px; }
.combo { display: flex; width: 151px; height: 19px; border: 1px solid #8a8376; margin-right: 1px; }
.combo input { flex: 1; min-width: 0; border: 0; padding: 0 2px; background: #fff; font: inherit; }
.bar .combo button { width: 14px; height: 17px; border-left: 1px solid #8a8376; background: #f0eadf; }
.bar .mem { color: #33339b; font: bold 12px "Liberation Serif", serif; }

.work { flex: 1; min-height: 0; display: flex; border-top: 2px solid #857f72; }
.side { width: 25px; flex: none; padding: 0 1px; }
.side-panel { width: 22px; height: 246px; border: 1px solid #8c8678; border-top: 0; background: #f0e9df; }
.side-panel button { width: 20px; height: 20px; border-bottom: 1px solid #8c8678; }
.side-panel .fn { height: auto; flex-direction: column; gap: 2px; border: 0; padding-top: 3px; }
.side-panel span { writing-mode: vertical-rl; font-size: 11px; line-height: 18px; }
.mdi { position: relative; flex: 1; min-width: 0; margin-right: 2px; border-left: 1px solid #6d695e; overflow: hidden; background: #fffbf0; }

/* Child windows float freely over the MDI area */
.win { position: absolute; display: flex; flex-direction: column; background: #fffbf0; }
.wt { flex: none; display: flex; align-items: center; color: #fff; }
.wt h2 { flex: 1; font-size: 12px; line-height: 18px; white-space: nowrap; overflow: hidden; }
.wtools { flex: none; height: 25px; display: flex; align-items: center; background: #ebe4d9; border-bottom: 1px solid #8f897b; }
.wtools button { width: 23px; }
.wtools .label { width: auto; }
.wbody { flex: 1; min-height: 0; display: flex; }
.back { inset: 0; }
.back .wt { height: 19px; padding: 0 1px 0 2px; gap: 3px; background: #90ace9; border-bottom: 1px solid #5268a8; color: #dce6fb; }
.back .wt button { width: 18px; height: 16px; }
.back .wt .boxed { border: 1px solid #dce6fb; }
.back .wtools { padding-left: 4px; gap: 12px; }
.back .wbody { padding: 8px 9px 8px 8px; }
.frame { flex: 1; display: flex; border: 1px solid #8f897b; background: #fff; align-items: flex-start; }
.journal { flex: 1; border-collapse: collapse; }
.journal th { height: 15px; padding: 0; background: #ebe4d9; }
.journal td { height: 17px; padding: 0 2px; border: 1px solid #8f897b; border-width: 1px 0; line-height: 14px; }
.journal td:first-child { width: 34px; }
.journal td:last-child { text-align: right; padding-right: 3px; }
.journal .ic { display: block; height: 15px; }
.vs { width: 14px; display: flex; flex-direction: column; align-items: center; background: #fffff4; border-left: 1px solid #e4e0d2; padding: 1px 0; align-self: stretch; }
.vs button, .hs button { width: 12px; height: 12px; border: 1px solid #b9b3a5; background: #ebe4d9; }
.vs svg, .hs svg { width: 11px; height: 11px; flex: none; }
.down svg { transform: rotate(180deg); }
.left svg { transform: rotate(-90deg); }
.right svg { transform: rotate(90deg); }
.track, .rest { flex: 1; }
.hs { height: 14px; display: flex; align-items: center; background: #fffff4; border-top: 1px solid #e4e0d2; padding: 0 1px; gap: 1px; }
.hs .thumb { height: 11px; border: 1px solid #beb7a9; background: #ebe4d9; }
.vs .thumb { width: 11px; border: 1px solid #beb7a9; background: #ebe4d9; }

.mid { left: 28px; top: 28px; width: 480px; height: 385px; border: 3px solid #8ba8e8; border-bottom-color: #5c7cc4; }
.mid .wt { height: 20px; padding-left: 2px; gap: 4px; background: #90ace9; color: #dce6fb; }
.mid .wtools { padding-left: 4px; gap: 5px; border-top: 1px solid #5268a8; }
.mid .wtools .label { gap: 5px; }
.form { flex: 1; min-height: 0; padding: 5px 6px 0; line-height: 24px; }
.tab { height: 17px; margin-top: 15px; padding: 0 5px; border: 1px solid #c5beb0; border-bottom: 0; border-radius: 2px 2px 0 0; }
.tabpage { height: 118px; margin-bottom: 4px; padding: 3px 6px; border: 1px solid #8f897b; line-height: 16px; }
.rowtools { display: flex; height: 21px; gap: 5px; padding-left: 4px; align-items: center; }
.rowtools .ic { display: block; }
.items-box { height: 86px; display: flex; flex-direction: column; justify-content: space-between; border: 1px solid #8f897b; background: #fff; font-size: 12px; }
.items { width: 100%; border-collapse: collapse; }
.items th { height: 15px; padding: 0 1px; font-weight: normal; text-align: left; background: #ebe4d9; line-height: 14px; }
.items td { height: 17px; padding: 0 1px; border-top: 1px solid #8f897b; border-bottom: 1px solid #8f897b; line-height: 14px; }
.items th:first-child { width: 21px; background: #c5beb2; border-right: 1px solid #8f897b; }
.items td:first-child { text-align: right; border-right: 1px solid #8f897b; }
.items .sel td:first-child { background: #000080; color: #fff; }
.items-box .thumb { flex: 1; }
.mid footer { flex: none; height: 26px; background: #ebe4d9; border-top: 1px solid #8f897b; }

.front { left: 81px; right: 86px; top: 9px; bottom: 34px; border: 3px solid #1f72f0; border-top-width: 1px; box-shadow: inset -1px -1px 0 #1a50b8; }
.front .wt { height: 21px; padding: 0 4px 0 2px; gap: 6px; background: #1c70ec; border-bottom: 1px solid #4f71ae; }
.front .wt h2 { margin-left: 2px; }
.front .wt button { width: 14px; }
.front .wtools { padding-left: 1px; gap: 0; }
.front .wbody { padding: 8px 9px; }
.viewer { flex: 1; min-width: 0; min-height: 0; display: grid; grid-template: 1fr 14px / 1fr 14px; border: 1px solid #8f897b; background: #fff; }
.viewer .vs .thumb { height: 361px; margin-top: 1px; }
.viewer .hs .thumb { width: 89%; }
.corner { background: #d6cfc2; }
.sheet { position: relative; min-width: 0; overflow: hidden; padding: 0 9px 0 12px; font-size: 12px; line-height: 15px; }
.cell { position: absolute; left: 0; top: 0; width: 14px; height: 16px; border: 2px solid #000; border-width: 1px 3px 3px 1px; background: #c0c0de; box-shadow: inset 0 0 0 1px #fff; }
.form-no { font-weight: bold; font-size: 11px; text-align: right; padding-right: 3px; }
.firm { display: flex; justify-content: space-between; margin-top: 15px; }
.firm-l { width: 749px; }
.firm-name { border-bottom: 1px solid #000; padding-left: 3px; height: 16px; }
.firm-sub { font-size: 11px; padding-left: 53px; color: #222; }
.firm-r { font-size: 11px; text-align: right; padding-right: 3px; color: #222; white-space: nowrap; }
.codes { display: flex; margin-top: 14px; line-height: 18px; height: 18px; white-space: nowrap; }
.code-l { width: 245px; padding-left: 3px; }
.box { border: 1px solid #000; text-align: center; line-height: 16px; }
.id { width: 220px; }
.code-r { flex: 1; text-align: right; padding-right: 4px; }
.ukud { width: 140px; }
.sheet h3 { margin: 14px 0 13px; font-size: 16px; line-height: 22px; text-align: center; }
.grid { border-collapse: collapse; table-layout: fixed; }
.grid th, .grid td { border: 1px solid #000; padding: 0; font-weight: normal; text-align: center; }
.head { width: 675px; margin-left: auto; }
.head tr { height: 16px; }
.h1 { width: 115px; } .h2 { width: 157px; } .h3 { width: 127px; } .h4 { width: 136px; }
.line { display: flex; height: 16px; margin-top: 15px; padding-left: 3px; white-space: nowrap; }
.line .cap { width: 64px; }
.line i { flex: 1; border-bottom: 1px solid #000; }
.line .who { flex: none; width: 398px; }
.line .via { width: 87px; padding-left: 2px; }
.goods { width: 100%; margin-top: 14px; }
.goods .r1 { height: 31px; }
.goods .r2 { height: 88px; }
.goods tbody tr { height: 15px; font-size: 11px; line-height: 14px; }
.grid .l { text-align: left; padding-left: 2px; }
.grid .r { text-align: right; padding-right: 2px; }
.clip { height: 87px; overflow: hidden; }
.c1 { width: 67px; } .c2 { width: 60px; } .c4 { width: 70px; } .c5 { width: 45px; } .c6 { width: 88px; } .c7 { width: 69px; } .c8 { width: 72px; }
.c9 { width: 55px; } .c10 { width: 64px; } .c11 { width: 72px; } .c12 { width: 63px; } .c13 { width: 76px; }

.wins { flex: none; height: 25px; display: flex; gap: 1px; padding: 2px 1px; border-top: 1px solid #fff; }
.wins button { width: 172px; height: 20px; justify-content: flex-start; gap: 1px; padding-left: 1px; border: 1px solid #857f72; background: #90ace9; color: #dfe8fc; }
.wins .on { background: #1f72f0; color: #fff; }
.wins .on span { padding-left: 2px; }
.wins span { overflow: hidden; }
.status { flex: none; height: 20px; display: flex; gap: 5px; padding-right: 1px; line-height: 18px; }
.status span { border: 1px solid #cbc4b6; height: 19px; }
.status .msg { flex: 1; padding-left: 3px; }
.status .key { padding: 0 2px 0 1px; font-size: 12px; color: #8a8478; }

.taskbar { flex: none; height: 60px; display: flex; color: #fff; font: 11px/16px "Noto Sans", sans-serif;
  background: linear-gradient(#1c50bf 0, #4a92ee 2px, #2b68de 5px, #245bdb 12px, #2560de 52px, #1c49b5 60px); }
.start { width: 96px; height: 30px; gap: 4px; padding-right: 12px; border-radius: 0 8px 12px 0; font: italic bold 16px "Open Sans", sans-serif; text-shadow: 1px 1px 2px #173f17;
  background: linear-gradient(#2b6f2b 0, #5bb75b 3px, #3c963c 8px, #379537 22px, #2a6f2a 30px); box-shadow: inset -4px 0 5px #286b28; }
.start svg { width: 19px; height: 19px; }
.quick { flex: none; display: grid; grid-template-columns: repeat(11, 23px); grid-template-rows: 30px 30px; margin-left: 8px; width: 265px; }
.quick .ic { width: 16px; height: 16px; }
.tasks { flex: 1; display: grid; grid-template-columns: repeat(4, minmax(0, 158px)); grid-auto-rows: 24px; gap: 2px; padding-top: 3px; }
.tasks button { justify-content: flex-start; gap: 4px; padding-left: 10px; border-radius: 3px; background: linear-gradient(#5a97f8, #3c80f2 4px, #3c7df0 20px, #2f68d8); overflow: hidden; }
.tasks .on { background: #1e4fb2; box-shadow: inset 1px 1px 2px #12347c; }
.lang { align-self: center; width: 16px; height: 16px; margin-right: 20px; background: #3068cc; font-size: 10px; }
.tray { flex: none; width: 192px; display: flex; padding-left: 8px; border-left: 1px solid #16308c; background: linear-gradient(#0c59b9 0, #1fb0f2 3px, #0f90ea 8px, #1290e8 52px, #0f70c8 60px); box-shadow: inset 1px 0 0 #20b8f6; }
.tray-ic { display: grid; grid-template-columns: repeat(6, 18px); grid-template-rows: repeat(3, 19px); padding-top: 2px; align-items: center; justify-items: center; }
.clock { flex: 1; display: flex; flex-direction: column; align-items: center; padding: 2px 8px 0 0; line-height: 19px; }

/* Desktop note pinned to the screen edge, over every window */
.sticky { position: absolute; right: 0; top: 357px; width: 44px; height: 276px; padding: 2px 0 0 2px; overflow: hidden; white-space: nowrap; background: #ffff99; box-shadow: 2px 3px 3px #8887; font-size: 12px; line-height: 16px; }
```
